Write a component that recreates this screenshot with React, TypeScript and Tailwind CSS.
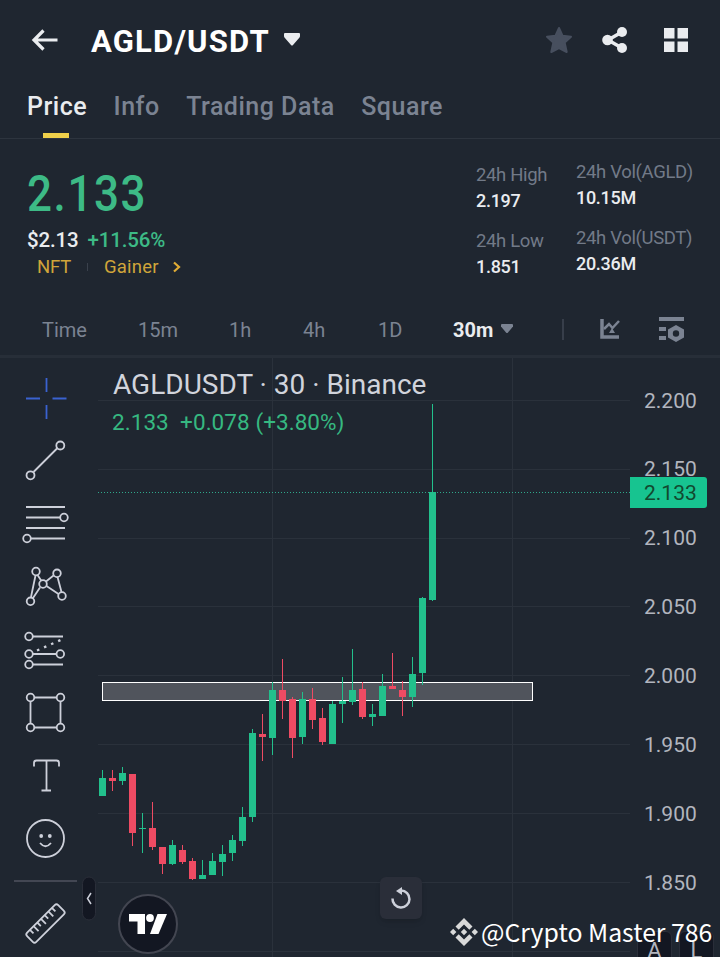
import React, { useState } from "react";
import clsx from "clsx";

const tabs = ["Price", "Info", "Trading Data", "Square"];

const stats = [
  {
    col: "w-[100px] pt-[23px]",
    items: [
      { label: "24h High", value: "2.197" },
      { label: "24h Low", value: "1.851" },
    ],
  },
  {
    col: "w-[144px] pt-5",
    items: [
      { label: "24h Vol(AGLD)", value: "10.15M" },
      { label: "24h Vol(USDT)", value: "20.36M" },
    ],
  },
];

const intervals = [
  { label: "Time", width: "w-[96px]" },
  { label: "15m", width: "w-[91px]" },
  { label: "1h", width: "w-[74px]" },
  { label: "4h", width: "w-[75px]" },
  { label: "1D", width: "w-[75px]" },
];

const axisLabels = [
  "2.200",
  "2.150",
  "2.100",
  "2.050",
  "2.000",
  "1.950",
  "1.900",
  "1.850",
];

// [wick top, body top, body bottom, wick bottom, up]
const candles: [number, number, number, number, boolean][] = [
  [770, 778, 796, 796, true],
  [770, 778, 781, 791, false],
  [767, 773, 781, 785, true],
  [774, 774, 833, 846, false],
  [813, 828, 829, 853, true],
  [802, 828, 847, 850, false],
  [847, 847, 864, 874, false],
  [840, 845, 864, 865, true],
  [845, 850, 862, 864, false],
  [858, 861, 879, 880, false],
  [860, 875, 879, 879, true],
  [853, 861, 875, 875, true],
  [845, 854, 862, 876, true],
  [835, 840, 853, 861, true],
  [807, 817, 841, 846, true],
  [729, 733, 817, 822, true],
  [714, 734, 737, 761, false],
  [682, 690, 738, 755, true],
  [659, 690, 701, 719, false],
  [697, 699, 738, 758, false],
  [692, 699, 737, 744, true],
  [688, 699, 720, 729, false],
  [708, 718, 742, 745, false],
  [701, 704, 744, 744, true],
  [677, 701, 704, 723, true],
  [649, 690, 702, 705, true],
  [682, 689, 717, 719, false],
  [704, 714, 717, 726, true],
  [674, 686, 716, 716, true],
  [653, 686, 689, 689, false],
  [681, 690, 697, 716, false],
  [657, 674, 697, 707, true],
  [597, 598, 673, 685, true],
  [404, 492, 600, 601, true],
];

const Header = () => (
  <div className="flex h-[78px] items-center pl-[31px] pr-[31px] pt-[2px]">
    <svg width="28" height="24" viewBox="0 0 28 24" fill="none" stroke="#eaecef" strokeWidth="3.200">
      <path d="M26.500 12H3M12.500 2.500 3 12l9.500 9.500" />
    </svg>
    <div className="ml-[32px] pt-[3px] text-[31px] leading-[36px] font-bold tracking-[1.200px] text-white">
      AGLD/USDT
    </div>
    <svg className="ml-[13px]" width="18" height="14" viewBox="0 0 18 14" fill="#eaecef">
      <path d="M2 0h14q1 0 1 1v2q0 1-.7 1.800L10 12q-1 1-2 0L1.700 4.800Q1 4 1 3V1q0-1 1-1z" />
    </svg>
    <svg className="ml-auto" width="28" height="28" viewBox="0 0 28 28" fill="#474f5e" stroke="#474f5e" strokeWidth="2" strokeLinejoin="round">
      <path d="m14 2 3.600 7.800 8.400 1-6.300 5.800L21.700 26 14 22l-7.700 4 2-9.400L2 10.800l8.400-1z" />
    </svg>
    <svg className="ml-[29px]" width="26" height="28" viewBox="0 0 26 28" fill="#eaecef" stroke="#eaecef">
      <path d="M20 6 6 14l14 8" fill="none" strokeWidth="3.500" />
      <circle cx="20" cy="6" r="5" stroke="none" />
      <circle cx="5.500" cy="14" r="5.300" stroke="none" />
      <circle cx="20" cy="22" r="5" stroke="none" />
    </svg>
    <svg className="ml-[36px]" width="25" height="24" viewBox="0 0 25 24" fill="#eaecef">
      <path d="M0 0h10.500v10.500H0zM13.500 0H24v10.500H13.500zM0 13.500h10.500V24H0zM13.500 13.500H24V24H13.500z" />
    </svg>
  </div>
);

const ToolBar = () => (
  <div className="w-[98px] shrink-0">
    <svg width="98" height="599" viewBox="0 358 98 599" fill="none" stroke="#cdd0da" strokeWidth="1.800">
      <path d="M46.500 378v14M46.500 405v14M26 398.500h14M52.500 398.500h14" stroke="#3a62d0" />
      <path d="M33.500 472 57.500 448" />
      <circle cx="60.300" cy="445.500" r="4" />
      <circle cx="30.500" cy="475.300" r="4" />
      <path d="M26 507h39M26 517.500h34M26 528h39M31 538.500h34" />
      <circle cx="64" cy="517.500" r="3.800" />
      <circle cx="27" cy="538.500" r="3.800" />
      <path d="M35.500 575.500 31 597M37.500 575l4 6M46 581.500l7.500-6M40 587.500l-7 10.500M46.500 586l12 8M57.500 577l4 15" />
      <circle cx="36" cy="571.500" r="3.800" />
      <circle cx="57" cy="573.300" r="3.800" />
      <circle cx="43" cy="584" r="3.800" />
      <circle cx="30.500" cy="601.300" r="3.800" />
      <circle cx="62" cy="596" r="3.800" />
      <path d="M33 636.500h30M33 654h23.500M33 664.500h30" />
      <path d="M37 650.500 63 639" strokeWidth="2.400" strokeDasharray="2.500 5.200" />
      <circle cx="29" cy="636.500" r="3.800" />
      <circle cx="29" cy="654" r="3.800" />
      <circle cx="60.300" cy="654" r="3.800" />
      <circle cx="29" cy="664.500" r="3.800" />
      <path d="M34.500 697.500h22M34.500 727.500h22M30.500 701.500v22M60.500 701.500v22" />
      <circle cx="30.500" cy="697.500" r="3.800" />
      <circle cx="60.500" cy="697.500" r="3.800" />
      <circle cx="30.500" cy="727.500" r="3.800" />
      <circle cx="60.500" cy="727.500" r="3.800" />
      <path d="M34 766.500v-3.500q0-2.500 2.500-2.500h20q2.500 0 2.500 2.500v3.500M46.500 760.500v30M41.500 790.500h9.500" />
      <circle cx="45.500" cy="838.500" r="18.500" />
      <path d="M40 843q5.500 6.500 11 0" />
      <g fill="#cdd0da" stroke="none">
        <circle cx="41.200" cy="836" r="1.900" />
        <circle cx="49.800" cy="836" r="1.900" />
      </g>
      <path d="M14 881h63" stroke="#434753" strokeWidth="2" />
      <g transform="rotate(-45 45.500 923.500)">
        <rect x="23.500" y="917" width="44" height="13" rx="2.500" />
        <path d="M30 917v5M35.200 917v7M40.400 917v5M45.600 917v7M50.800 917v5M56 917v7M61 917v5" />
      </g>
      <rect x="82.500" y="877" width="13" height="43" rx="6.500" fill="#131722" stroke="#2a2e39" strokeWidth="1" />
      <path d="m91 893-3.500 5.500L91 904" strokeWidth="1.500" />
    </svg>
  </div>
);

const Chart = () => (
  <div className="relative w-[532px] shrink-0">
    <svg width="532" height="599" viewBox="98 358 532 599">
      <g stroke="#2a313b">
        {axisLabels.concat("1.800").map((label, i) => (
          <path key={label} d={`M98 ${Math.floor(400.2 + i * 68.9) + 0.5}h532`} />
        ))}
        <path d="M272.500 358v599M512.500 358v599" />
      </g>
      <rect x="102.500" y="682.500" width="430" height="18" fill="#50545c" stroke="#ffffff" />
      <path d="M98 492.500h532" stroke="#2fa88b" strokeDasharray="1 2" />
      {candles.map(([high, top, bottom, low, up], i) => (
        <g key={i} fill={up ? "#22c08c" : "#ee4b63"}>
          <rect x={102 + i * 10} y={high} width="1" height={low - high} />
          <rect x={99 + i * 10} y={top} width="7" height={bottom - top} />
        </g>
      ))}
    </svg>
    <div className="absolute left-[15px] top-[11px] whitespace-nowrap text-[28px] leading-8 text-[#d1d4dc]">
      AGLDUSDT · 30 · Binance
    </div>
    <div className="absolute left-[14px] top-[51px] whitespace-pre text-[22.500px] leading-[27px] tracking-[0.06px] text-[#36b881]">
      2.133  +0.078 (+3.80%)
    </div>
    <div className="absolute left-5 top-[536px] flex size-[60px] items-center justify-center rounded-full border-2 border-[#434651] bg-[#131722]">
      <svg width="38" height="20" viewBox="0 0 38 20" fill="#ffffff">
        <path d="M0 0h16v20H8.500V7.500H0z" />
        <circle cx="21" cy="4" r="3.900" />
        <path d="M28.500 0H38l-8.500 20H21z" />
      </svg>
    </div>
    <div className="absolute left-[282px] top-[519px] flex size-[42px] items-center justify-center rounded-md bg-[#2a2e39] shadow-md">
      <svg width="22" height="24" viewBox="0 0 22 24" fill="none" stroke="#cdd0da" strokeWidth="2.500">
        <path d="M2.500 12.500a8.500 8.500 0 1 0 8.500-8" />
        <path d="M12 1v8L6 5z" fill="#cdd0da" stroke="none" />
      </svg>
    </div>
  </div>
);

const App = () => {
  const [activeTab, setActiveTab] = useState("Price");

  return (
    <div className="relative flex h-[957px] w-[720px] flex-col overflow-hidden bg-[#1f2630] font-['Roboto',sans-serif]">
      <Header />
      <div className="flex h-[61px] gap-[26.500px] border-b border-[#2d343e] pl-[27px] pt-[14px]">
        {tabs.map((tab) => (
          <button
            key={tab}
            onClick={() => setActiveTab(tab)}
            className={clsx(
              "flex flex-col items-center text-[25px] leading-[30px] font-medium tracking-[0.500px] whitespace-nowrap",
              tab === activeTab ? "text-[#eaecef]" : "text-[#7b8392]"
            )}
          >
            {tab}
            {tab === activeTab && (
              <span className="mt-[11px] mr-[2px] h-[5px] w-[26px] bg-[#f0d04a]" />
            )}
          </button>
        ))}
      </div>

      <div className="flex h-[161px]">
        <div className="w-[476px] pl-[27px] pt-[29px]">
          <div className="origin-left scale-x-[0.88] text-[50px] leading-[52px] font-medium tracking-[1.800px] text-[#3dba86]">
            2.133
          </div>
          <div className="mt-2 flex gap-[9px] text-[20.500px] leading-6 font-medium tracking-[-0.150px]">
            <span className="text-[#eaecef]">$2.13</span>
            <span className="text-[#3dba86]">+11.56%</span>
          </div>
          <div className="mt-[3px] flex items-center pl-[10px] text-[18.500px] leading-6 text-[#d0a53a]">
            <span className="tracking-[-0.200px]">NFT</span>
            <span className="mx-4 h-2 w-px bg-[#3a414c]" />
            <span className="tracking-[0.200px]">Gainer</span>
            <svg className="ml-[14px]" width="8" height="12" viewBox="0 0 8 12" fill="none" stroke="#e0ac35" strokeWidth="2.200">
              <path d="m1 1.500 5 4.500-5 4.500" />
            </svg>
          </div>
        </div>
        {stats.map((group) => (
          <div key={group.col} className={group.col}>
            {group.items.map((item) => (
              <div key={item.label} className="h-[66px] whitespace-nowrap">
                <div className="text-[18.500px] leading-[26px] tracking-[-0.350px] text-[#727a88]">
                  {item.label}
                </div>
                <div className="text-[18px] leading-[26px] font-medium tracking-[-0.300px] text-[#eaecef]">
                  {item.value}
                </div>
              </div>
            ))}
          </div>
        ))}
      </div>

      <div className="flex h-[58px] items-center border-b-[3px] border-[#272e38] pl-[42px] pt-[3px] text-[20px] text-[#7b8392]">
        {intervals.map((item) => (
          <button key={item.label} className={clsx("shrink-0 pt-0.5 text-left", item.width)}>
            {item.label}
          </button>
        ))}
        <span className="w-12 pt-0.5 font-bold text-[#eaecef]">30m</span>
        <svg width="12" height="10" viewBox="0 0 12 10" fill="#7b8392">
          <path d="M1 0h10q1 0 1 1v1.500L7 8.500q-1 1-2 0L0 2.500V1q0-1 1-1z" />
        </svg>
        <span className="ml-[49px] h-[21px] w-0.5 bg-[#373e4a]" />
        <svg className="ml-9" width="20" height="20" viewBox="0 0 20 20" fill="none" stroke="#7b8392">
          <path d="M2 0v18h17" strokeWidth="3.500" />
          <path d="m4 10 5-5 3.500 4L19 2" strokeWidth="2.500" />
          <path d="m12 9-3 5h6z" fill="#7b8392" stroke="none" />
        </svg>
        <svg className="ml-[39px]" width="25" height="26" viewBox="0 0 25 26" fill="#7b8392">
          <path d="M0 1h25v4H0zM0 11h7v4H0zM0 20h7v4H0z" />
          <path d="m17 9 8 4.500v8L17 26l-8-4.500v-8zm0 5.300a3.200 3.200 0 1 0 0 6.400 3.200 3.200 0 0 0 0-6.400z" fillRule="evenodd" />
        </svg>
      </div>

      <div className="flex h-[599px]">
        <ToolBar />
        <Chart />
        <div className="relative w-[90px] overflow-hidden">
          <div className="pl-[14px] pt-[8.500px] text-[21px] text-[#b2b5be]">
            {axisLabels.map((label) => (
              <div key={label} className="h-[68.900px] leading-[68.900px]">
                {label}
              </div>
            ))}
          </div>
          <div className="absolute left-0 top-[119px] h-[31px] w-[77px] rounded-r-[3px] bg-[#17c490] pl-[14px] text-[21px] leading-[32px] text-[#12492f]">
            2.133
          </div>
          <div className="absolute left-[7px] top-[573px] flex gap-[7px] text-center text-[22px] leading-[37px] text-[#b2b5be]">
            <span className="h-10 w-[35px] rounded-md border border-[#2a2e39] bg-[#131722]">A</span>
            <span className="h-10 w-[35px] rounded-md border border-[#2a2e39] bg-[#131722]">L</span>
          </div>
        </div>
      </div>

      <div className="absolute left-[450px] top-[912px] flex items-center whitespace-nowrap font-['Noto_Sans_CJK_SC',sans-serif] text-[24.800px] leading-[38px] text-white">
        <svg className="mr-[3px] mt-0.5" width="28" height="28" viewBox="0 0 28 28" fill="#d9d9d9">
          <path d="m14 0 8.500 8.500-3.200 3.200L14 6.400l-5.300 5.300-3.200-3.200zM14 28l-8.500-8.500 3.200-3.200 5.300 5.300 5.300-5.300 3.200 3.200zM14 10.800l3.200 3.200-3.200 3.200-3.200-3.200zM3.200 10.800 6.400 14l-3.200 3.200L0 14zM24.800 10.800 28 14l-3.200 3.200-3.200-3.200z" />
        </svg>
        @Crypto Master 786
      </div>
    </div>
  );
};

export default App;
